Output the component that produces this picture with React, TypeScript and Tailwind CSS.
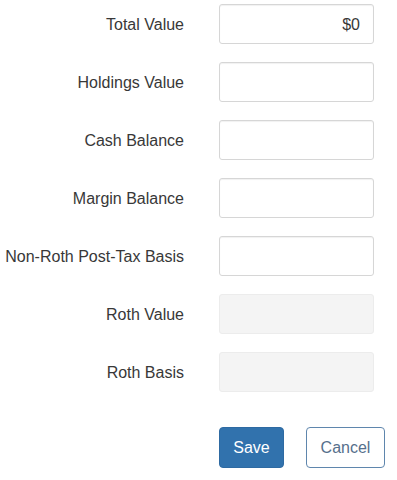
import React from "react";

const rows: { label: string; value?: string; disabled?: boolean }[] = [
  { label: "Total Value", value: "$0" },
  { label: "Holdings Value" },
  { label: "Cash Balance" },
  { label: "Margin Balance" },
  { label: "Non-Roth Post-Tax Basis" },
  { label: "Roth Value", disabled: true },
  { label: "Roth Basis", disabled: true },
];

export default function App() {
  return (
    <div
      className="w-[397px] h-[480px] bg-white text-[#383838] text-[16px]"
      style={{ fontFamily: '"Liberation Sans", Arial, sans-serif' }}
    >
      <div className="flex flex-col gap-[18px] pt-[4px]">
        {rows.map((r) => (
          <div key={r.label} className="flex items-center">
            <div className="w-[184px] text-right pt-[1px]">{r.label}</div>
            <div className="ml-[35px]">
              <div
                className={
                  "w-[155px] h-[40px] rounded-[3px] border flex items-center justify-end pr-[13px] pt-[1px] " +
                  (r.disabled
                    ? "bg-[#f4f4f4] border-[#ececec]"
                    : "bg-white border-[#d6d6d6] shadow-[inset_0_1px_1px_rgba(0,0,0,0.06)]")
                }
              >
                {r.value ?? ""}
              </div>
            </div>
          </div>
        ))}
      </div>
      <div className="flex mt-[35px] ml-[219px] gap-[22px]">
        <button className="w-[65px] h-[41px] rounded-[4px] bg-[#3172ad] border border-[#2e6aa2] text-white text-[16px]">
          Save
        </button>
        <button className="w-[79px] h-[41px] rounded-[4px] bg-white border border-[#5f86ad] text-[#56708c] text-[16px]">
          Cancel
        </button>
      </div>
    </div>
  );
}
